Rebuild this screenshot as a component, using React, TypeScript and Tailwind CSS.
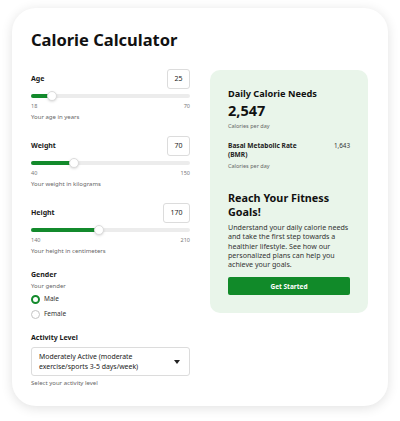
import React from 'react';

/**
 * Calorie Calculator card
 * Left: inputs (sliders, radio, select). Right: result panel.
 */

interface SliderFieldProps {
  label: string;
  value: number;
  min: number;
  max: number;
  hint: string;
  inputWidth: string;
}

function SliderField({ label, value, min, max, hint, inputWidth }: SliderFieldProps) {
  const pct = ((value - min) / (max - min)) * 100;
  return (
    <div className="flex flex-col">
      <div className="flex items-center justify-between h-[20px]">
        <span className="text-[7px] leading-[10px] font-bold text-[#1a1a1a]">{label}</span>
        <div
          className={`${inputWidth} h-[20px] flex items-center justify-center rounded-[3px] border border-[#dcdcdc] text-[7px] text-[#222]`}
        >
          {value}
        </div>
      </div>
      <div className="relative mt-[5px] h-[4px] rounded-full bg-[#ececec]">
        <div className="absolute left-0 top-0 h-[4px] rounded-full bg-[#138a2c]" style={{ width: `${pct}%` }} />
        <div
          className="absolute top-1/2 w-[10px] h-[10px] -translate-x-1/2 -translate-y-1/2 rounded-full bg-white border border-[#dcdcdc] shadow-sm"
          style={{ left: `${pct}%` }}
        />
      </div>
      <div className="mt-[4px] flex justify-between text-[5.5px] leading-[8px] text-[#777]">
        <span>{min}</span>
        <span>{max}</span>
      </div>
      <div className="mt-[3px] text-[6px] leading-[8px] text-[#666]">{hint}</div>
    </div>
  );
}

export default function App() {
  return (
    <div
      className="w-[400px] h-[421px] bg-white pt-[8px] pl-[12px]"
      style={{ fontFamily: '"Noto Sans", "Open Sans", sans-serif' }}
    >
      <div className="w-[376px] h-[398px] rounded-[24px] bg-white shadow-[0_2px_12px_rgba(0,0,0,0.12)] pl-[19px] pr-[20px] pt-[21px]">
        <h1 className="text-[16.5px] font-bold text-[#111] leading-[22px]">Calorie Calculator</h1>

        <div className="mt-[18px] flex gap-[20px]">
          {/* Inputs */}
          <div className="w-[159px] flex flex-col">
            <SliderField label="Age" value={25} min={18} max={70} hint="Your age in years" inputWidth="w-[23px]" />
            <div className="mt-[15px]">
              <SliderField label="Weight" value={70} min={40} max={150} hint="Your weight in kilograms" inputWidth="w-[23px]" />
            </div>
            <div className="mt-[15px]">
              <SliderField label="Height" value={170} min={140} max={210} hint="Your height in centimeters" inputWidth="w-[27px]" />
            </div>

            <div className="mt-[15px]">
              <div className="text-[7px] leading-[10px] font-bold text-[#1a1a1a]">Gender</div>
              <div className="mt-[2px] text-[6px] leading-[8px] text-[#666]">Your gender</div>
              <div className="mt-[4px] h-[10px] flex items-center gap-[4px]">
                <span className="w-[9px] h-[9px] rounded-full border-[2.5px] border-[#138a2c] bg-white" />
                <span className="text-[6.5px] text-[#333]">Male</span>
              </div>
              <div className="mt-[5px] h-[10px] flex items-center gap-[4px]">
                <span className="w-[9px] h-[9px] rounded-full border border-[#c4c4c4] bg-white" />
                <span className="text-[6.5px] text-[#333]">Female</span>
              </div>
            </div>

            <div className="mt-[14px]">
              <div className="text-[7px] leading-[10px] font-bold text-[#1a1a1a]">Activity Level</div>
              <div className="mt-[4px] h-[29px] flex items-center justify-between rounded-[3px] border border-[#dcdcdc] pl-[7px] pr-[9px]">
                <span className="text-[6.9px] leading-[10px] text-[#222]">
                  Moderately Active (moderate
                  <br />
                  exercise/sports 3-5 days/week)
                </span>
                <svg width="6" height="4" viewBox="0 0 6 4">
                  <path d="M0 0h6L3 4z" fill="#222" />
                </svg>
              </div>
              <div className="mt-[3px] text-[6px] leading-[8px] text-[#666]">Select your activity level</div>
            </div>
          </div>

          {/* Results */}
          <div className="w-[158px] h-[243px] mt-[1px] rounded-[10px] bg-[#e9f5ea] pl-[18px] pr-[18px] pt-[18px]">
            <div className="text-[9.2px] font-bold text-[#111] leading-[12px]">Daily Calorie Needs</div>
            <div className="mt-[2px] text-[14.5px] font-bold text-[#111] leading-[16px]">2,547</div>
            <div className="mt-[4px] text-[5.5px] leading-[8px] text-[#666]">Calories per day</div>
            <div className="mt-[11px] flex justify-between">
              <span className="text-[6.6px] font-bold text-[#222] leading-[9px]">
                Basal Metabolic Rate
                <br />
                (BMR)
              </span>
              <span className="text-[6.3px] text-[#333] leading-[9px]">1,643</span>
            </div>
            <div className="mt-[3px] text-[5.5px] leading-[8px] text-[#666]">Calories per day</div>

            <div className="mt-[21px] text-[10.8px] font-bold text-[#111] leading-[14px]">
              Reach Your Fitness
              <br />
              Goals!
            </div>
            <p className="mt-[4px] text-[7.1px] leading-[9.3px] text-[#333]">
              Understand your daily calorie needs and take the first step towards a healthier lifestyle. See how our
              personalized plans can help you achieve your goals.
            </p>
            <button
              type="button"
              className="mt-[8px] w-[122px] h-[18px] rounded-[2px] bg-[#118a29] text-[6.5px] font-bold text-white"
            >
              Get Started
            </button>
          </div>
        </div>
      </div>
    </div>
  );
}
